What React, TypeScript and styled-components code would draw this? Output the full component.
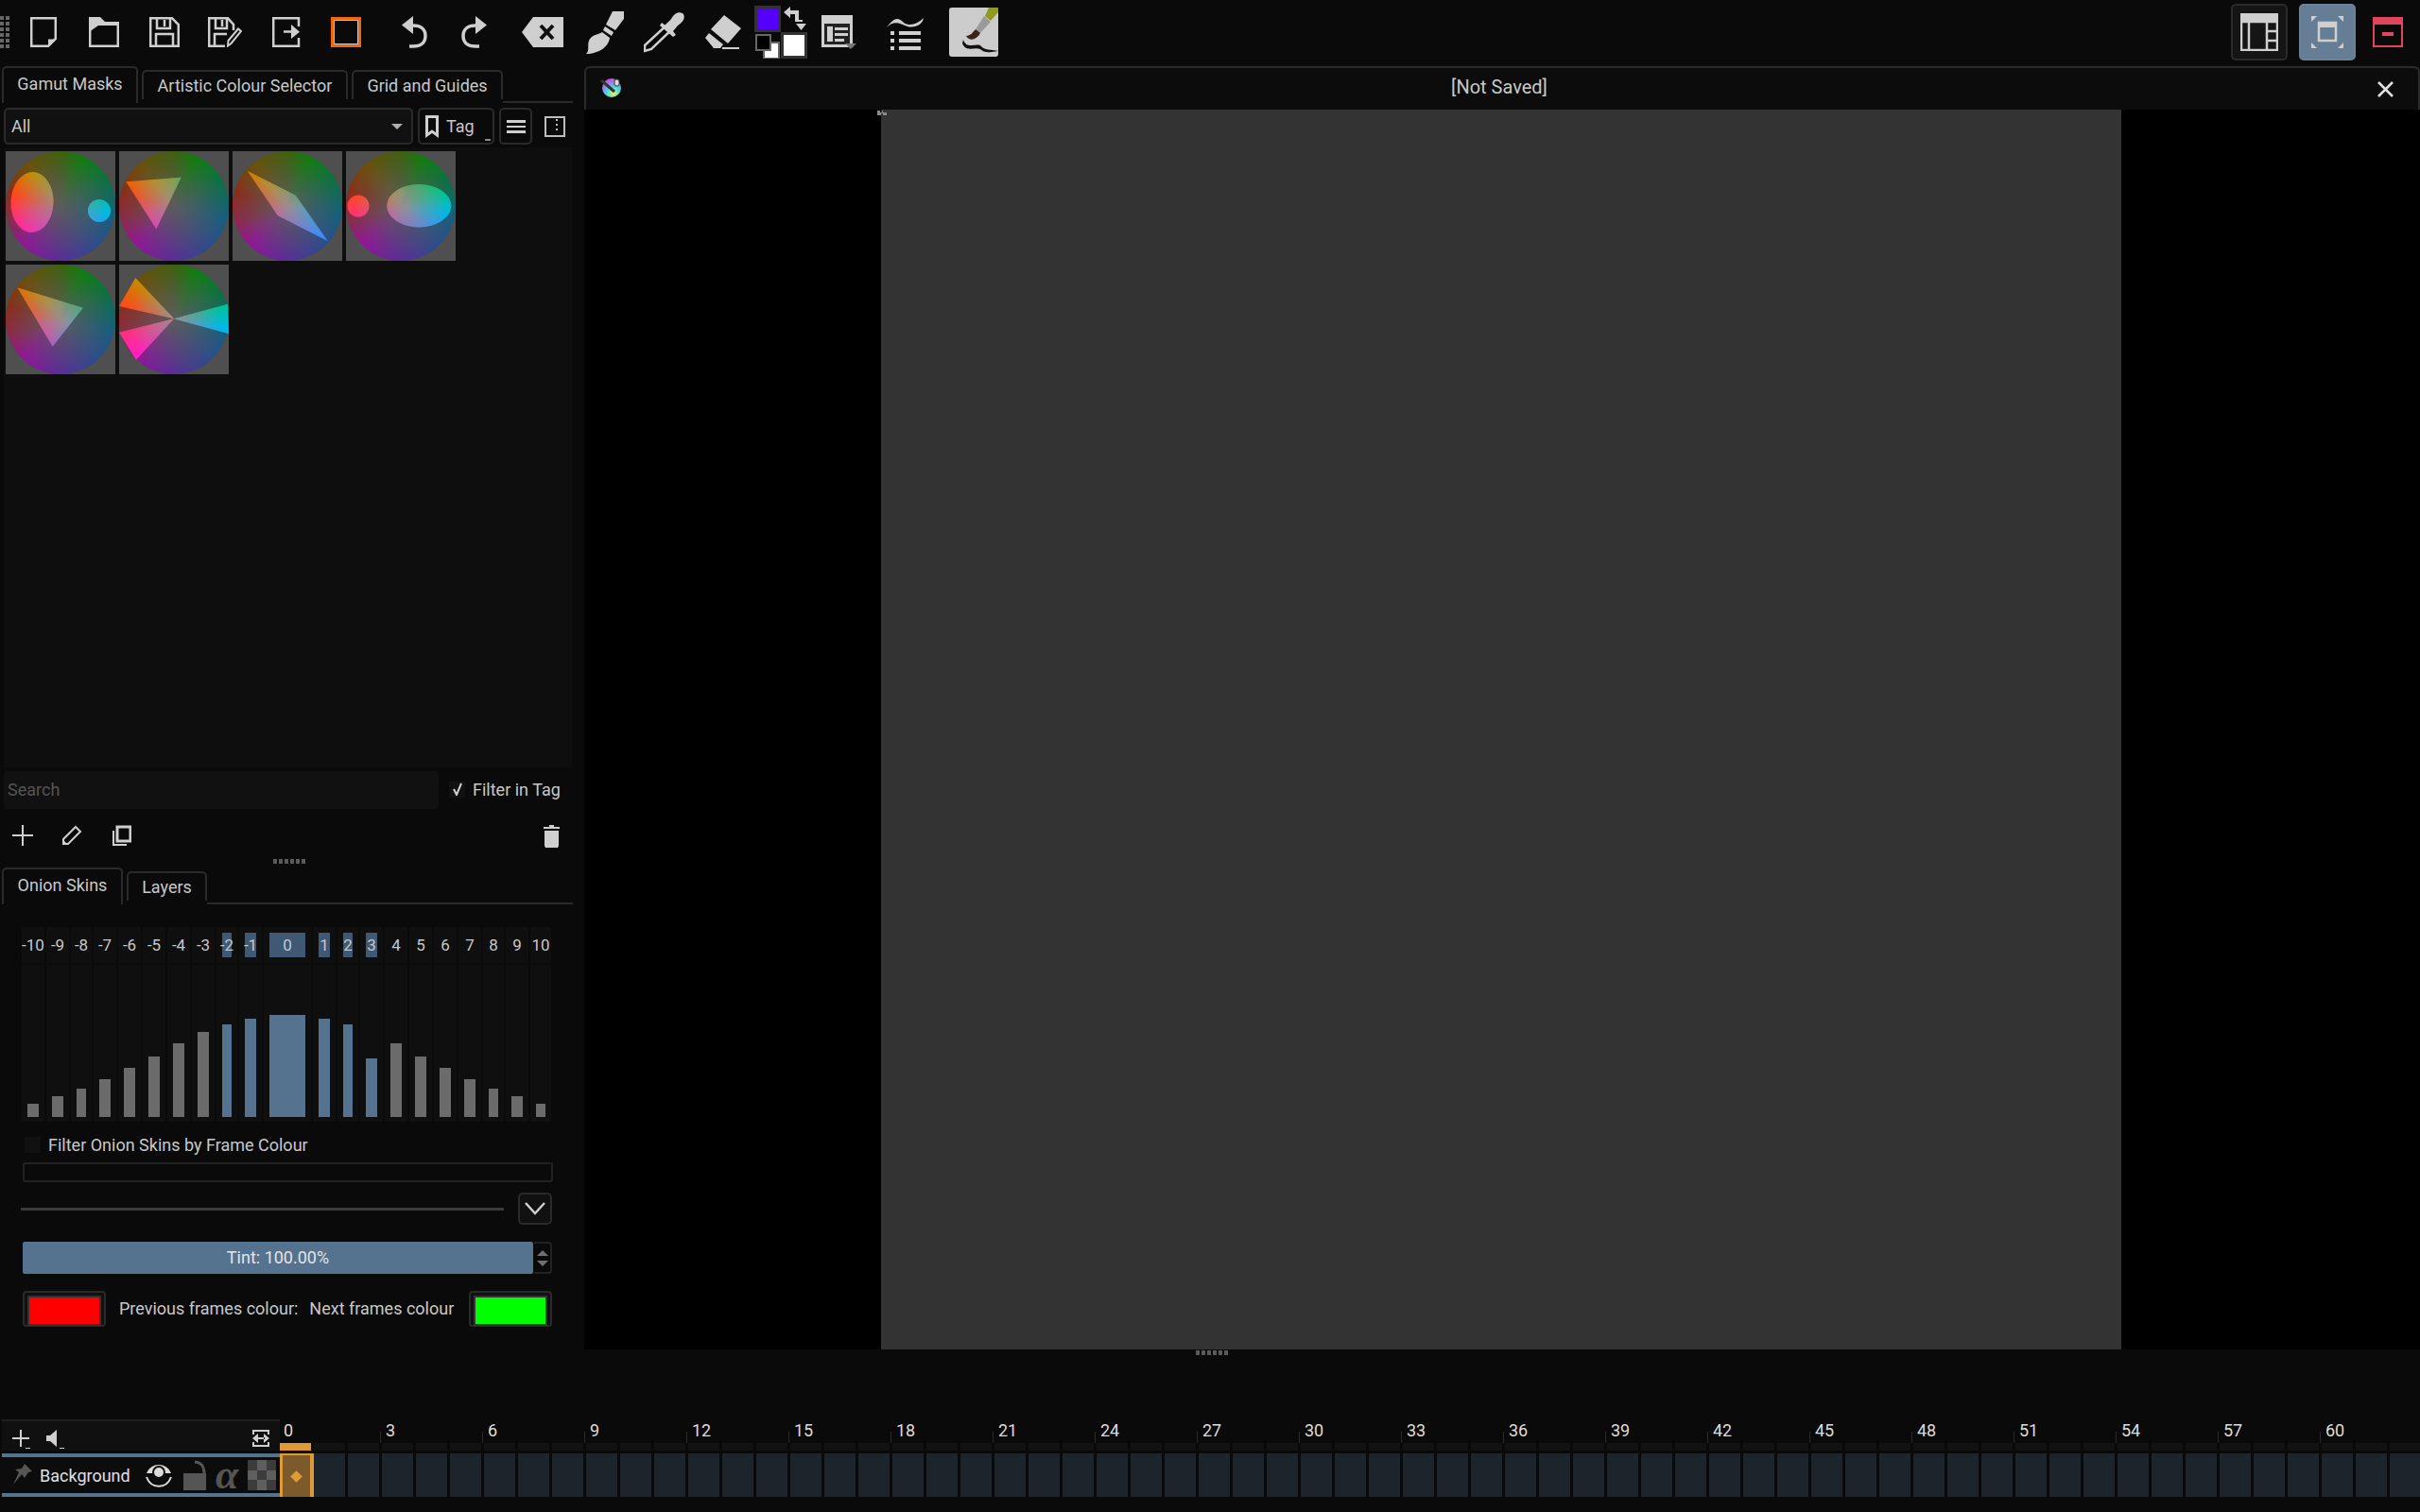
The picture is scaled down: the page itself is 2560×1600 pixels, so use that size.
import styled, { createGlobalStyle } from 'styled-components';

const GlobalStyle = createGlobalStyle`
  html, body {
    margin: 0;
    padding: 0;
    background: #0a0a0a;
  }
  * {
    box-sizing: border-box;
  }
`;

const Page = styled.div`
  width: 2560px;
  height: 1600px;
  overflow: hidden;
  display: flex;
  flex-direction: column;
  background: #0a0a0a;
  color: #c8c8c8;
  font-family: Roboto, 'Liberation Sans', sans-serif;
  font-size: 18px;
`;

const Toolbar = styled.div`
  height: 68px;
  flex: none;
  display: flex;
  align-items: center;
  padding-right: 18px;
`;

const Tool = styled.svg<{ $gap?: number; $solid?: boolean }>`
  flex: none;
  display: block;
  margin-left: ${(p) => p.$gap ?? 0}px;
  fill: none;
  stroke: ${(p) => (p.$solid ? 'none' : '#cfcfcf')};
  stroke-width: 2.5;
`;

const ColourGroup = styled.div`
  flex: none;
  margin-left: 14px;
  display: grid;
  grid-template-columns: 28px 28px;
  grid-template-rows: 28px 28px;
`;

const Swatch = styled.div<{ $colour: string }>`
  background: ${(p) => p.$colour};
  border: 3px solid #333;
`;

const Spacer = styled.div`
  flex: 1;
`;

const ModeButton = styled.div<{ $active?: boolean }>`
  width: 60px;
  height: 60px;
  margin-right: 12px;
  display: flex;
  align-items: center;
  justify-content: center;
  border-radius: 5px;
  border: 2px solid ${(p) => (p.$active ? '#6c8299' : '#2a2a2a')};
  background: ${(p) => (p.$active ? '#667d96' : '#151515')};
`;

const Body = styled.div`
  flex: 1;
  display: flex;
  min-height: 0;
`;

const Dock = styled.div`
  width: 612px;
  flex: none;
  padding-bottom: 96px;
  display: flex;
  flex-direction: column;
`;

const TabBar = styled.div<{ $top: number }>`
  height: 40px;
  flex: none;
  margin-top: ${(p) => p.$top}px;
  padding-left: 2px;
  padding-right: 6px;
  display: flex;
  align-items: flex-start;
  gap: 4px;
`;

const TabLine = styled.div`
  flex: 1;
  align-self: flex-end;
  height: 2px;
  margin-bottom: 1px;
  margin-left: -4px;
  background: #2a2a2a;
`;

const Tab = styled.div<{ $active?: boolean; $width: number }>`
  width: ${(p) => p.$width}px;
  height: ${(p) => (p.$active ? 39 : 31)}px;
  margin-top: ${(p) => (p.$active ? 0 : 4)}px;
  border: 2px solid #2a2a2a;
  border-bottom: none;
  border-radius: 5px 5px 0 0;
  display: flex;
  align-items: center;
  justify-content: center;
  padding-bottom: ${(p) => (p.$active ? 5 : 0)}px;
  font-size: 18px;
`;

const FilterRow = styled.div`
  height: 39px;
  flex: none;
  margin-top: 4px;
  padding-left: 4px;
  display: flex;
  align-items: stretch;
  gap: 5px;
`;

const Combo = styled.div`
  width: 433px;
  display: flex;
  align-items: center;
  justify-content: space-between;
  padding: 0 9px 0 6px;
  border: 2px solid #2a2a2a;
  border-radius: 5px;
  background: #111;
`;

const Caret = styled.div`
  width: 0;
  height: 0;
  border-left: 6px solid transparent;
  border-right: 6px solid transparent;
  border-top: 6px solid #b0b0b0;
`;

const SmallButton = styled.div<{ $width: number; $gap?: number; $bare?: boolean }>`
  width: ${(p) => p.$width}px;
  margin-left: ${(p) => p.$gap ?? 0}px;
  display: flex;
  align-items: center;
  justify-content: center;
  gap: 8px;
  border: 2px solid ${(p) => (p.$bare ? 'transparent' : '#2a2a2a')};
  border-radius: 5px;
`;

const TagButton = styled(SmallButton)`
  justify-content: flex-start;
  padding-left: 6px;
  position: relative;

  &::after {
    content: '';
    position: absolute;
    right: 2px;
    bottom: 2px;
    width: 6px;
    height: 2px;
    background: #8a8a8a;
  }
`;

const MaskPanel = styled.div`
  flex: 1;
  min-height: 0;
  margin: 3px 7px 0 4px;
  padding: 4px 2px;
  background: #0e0e0e;
  display: grid;
  grid-template-columns: repeat(4, 116px);
  grid-auto-rows: 116px;
  gap: 4px;
`;

const Thumb = styled.div`
  position: relative;
  width: 116px;
  height: 116px;
  background: #4f4f4f;
`;

const Wheel = styled.div`
  width: 116px;
  height: 116px;
  border-radius: 50%;
  background:
    radial-gradient(closest-side, #5c5c5c 0, rgba(92, 92, 92, 0) 100%),
    conic-gradient(#3f6010 0deg, #0d7e0c 25deg, #0b7048 65deg, #12607e 100deg, #2f4a8c 140deg,
      #5e2a98 185deg, #94149a 225deg, #8c2a48 255deg, #8c2c18 285deg, #6c5008 320deg, #3f6010 360deg);
`;

const Shape = styled.div<{ $path: string }>`
  position: absolute;
  inset: 0;
  clip-path: path('${(p) => p.$path}');
  background:
    radial-gradient(closest-side, #9c8c90 0, rgba(150, 140, 140, 0) 85%),
    conic-gradient(#70b020 0deg, #20b040 25deg, #00c878 65deg, #00b8e8 100deg, #4a80ff 140deg,
      #8a50e8 185deg, #ff20c0 225deg, #ff3080 255deg, #ff4a18 285deg, #c09000 320deg, #70b020 360deg);
`;

const SearchRow = styled.div`
  height: 40px;
  flex: none;
  margin-top: 4px;
  padding-left: 4px;
  display: flex;
  align-items: center;
`;

const SearchBox = styled.div`
  width: 460px;
  height: 40px;
  padding: 0 0 2px 4px;
  display: flex;
  align-items: center;
  background: #111;
  border-radius: 3px;
  color: #555;
`;

const Check = styled.div`
  width: 17px;
  height: 17px;
  flex: none;
  background: #111;
  display: flex;
  align-items: center;
  justify-content: center;
`;

const CheckLabel = styled.span`
  margin-left: 8px;
`;

const FilterCheck = styled.div`
  margin-left: 11px;
  padding-bottom: 2px;
  display: flex;
  align-items: center;
`;

const ActionRow = styled.div`
  height: 30px;
  flex: none;
  margin-top: 14px;
  padding-left: 13px;
  padding-right: 20px;
  display: flex;
  align-items: center;
  justify-content: space-between;
`;

const ActionGroup = styled.div`
  display: flex;
  gap: 30px;
`;

const Grip = styled.div`
  width: 34px;
  height: 5px;
  background-image: repeating-linear-gradient(90deg, #5a5a5a 0 4px, transparent 4px 6px);
`;

const GripRow = styled.div`
  height: 5px;
  flex: none;
  margin-top: 9px;
  display: flex;
  justify-content: center;
`;

const OnionGrid = styled.div`
  flex: none;
  margin: 23px 0 0 23px;
  display: flex;
  gap: 2px;
`;

const OnionColumn = styled.div<{ $width: number }>`
  width: ${(p) => p.$width}px;
  display: flex;
  flex-direction: column;
  gap: 2px;
`;

const OnionNumber = styled.div`
  height: 38px;
  background: #0f0f0f;
  display: flex;
  justify-content: center;
  align-items: center;
`;

const OnionLabel = styled.div<{ $on: boolean; $barWidth: number }>`
  width: ${(p) => p.$barWidth}px;
  height: 26px;
  display: flex;
  align-items: center;
  justify-content: center;
  white-space: nowrap;
  font-size: 17px;
  background: ${(p) => (p.$on ? '#3f5873' : 'transparent')};
`;

const OnionTrack = styled.div`
  height: 166px;
  padding-bottom: 5px;
  background: #0f0f0f;
  display: flex;
  justify-content: center;
  align-items: flex-end;
`;

const OnionBar = styled.div<{ $on: boolean; $barWidth: number; $height: number }>`
  width: ${(p) => p.$barWidth}px;
  height: ${(p) => p.$height}px;
  background: ${(p) => (p.$on ? '#55728f' : '#6b6b6b')};
`;

const FrameFilter = styled.div`
  margin: 16px 0 0 26px;
  display: flex;
  align-items: center;
  height: 16px;
  flex: none;
`;

const EmptyBox = styled.div`
  margin: 11px 0 0 24px;
  width: 561px;
  height: 21px;
  flex: none;
  border: 2px solid #222;
  border-radius: 3px;
`;

const SliderRow = styled.div`
  margin: 11px 0 0 22px;
  height: 34px;
  flex: none;
  display: flex;
  align-items: center;
`;

const SliderLine = styled.div`
  width: 511px;
  height: 3px;
  background: #3a3a3a;
`;

const ChevronButton = styled.div`
  width: 36px;
  height: 34px;
  margin-left: 15px;
  display: flex;
  align-items: center;
  justify-content: center;
  border: 2px solid #2a2a2a;
  border-radius: 5px;
  background: #111;
`;

const TintRow = styled.div`
  margin: 18px 0 0 24px;
  width: 560px;
  height: 34px;
  flex: none;
  display: flex;
`;

const TintBar = styled.div`
  width: 540px;
  padding-bottom: 2px;
  display: flex;
  align-items: center;
  justify-content: center;
  background: #55728f;
  border-radius: 2px;
  color: #e4e4e4;
`;

const Spin = styled.div`
  flex: 1;
  margin-left: 1px;
  display: flex;
  flex-direction: column;
  align-items: center;
  justify-content: center;
  gap: 5px;
  border: 2px solid #222;
  border-left: none;
  border-radius: 0 4px 4px 0;
`;

const Arrow = styled.div<{ $up?: boolean }>`
  width: 0;
  height: 0;
  border-left: 6px solid transparent;
  border-right: 6px solid transparent;
  ${(p) => (p.$up ? 'border-bottom' : 'border-top')}: 6px solid #707070;
`;

const FramesRow = styled.div`
  margin: 18px 0 0 24px;
  width: 560px;
  height: 38px;
  flex: none;
  display: flex;
  align-items: center;
`;

const FrameSwatch = styled.div<{ $colour: string }>`
  width: 88px;
  height: 38px;
  flex: none;
  padding: 3px;
  border: 2px solid #2a2a2a;
  border-radius: 4px;
  background: #111;

  &::after {
    content: '';
    display: block;
    height: 100%;
    background: ${(p) => p.$colour};
    border: 2px solid #333;
  }
`;

const FrameText = styled.span<{ $gap: number }>`
  margin-left: ${(p) => p.$gap}px;
  padding-bottom: 2px;
  white-space: nowrap;
`;

const Main = styled.div`
  flex: 1;
  min-width: 0;
  padding: 2px 0 0 6px;
  display: flex;
  flex-direction: column;
`;

const SubWindow = styled.div`
  height: 1358px;
  flex: none;
  display: flex;
  flex-direction: column;
`;

const SubHeader = styled.div`
  height: 46px;
  flex: none;
  padding: 0 26px 4px 15px;
  display: flex;
  align-items: center;
  justify-content: space-between;
  border: 2px solid #2a2a2a;
  border-bottom: none;
  border-radius: 6px 6px 0 0;
  background: #0c0c0c;
`;

const SubTitle = styled.div`
  flex: 1;
  text-align: center;
  font-size: 20px;
`;

const CloseIcon = styled.svg`
  margin-top: 4px;
`;

const CanvasArea = styled.div`
  flex: 1;
  background: #000;
  display: flex;
  justify-content: center;
  padding-right: 2px;
`;

const Sheet = styled.div`
  width: 1312px;
  background: #333;
  position: relative;
`;

const SheetMark = styled.svg`
  position: absolute;
  left: -4px;
  top: 1px;
`;

const MainGrip = styled.div`
  height: 6px;
  flex: none;
  display: flex;
  align-items: center;
  justify-content: center;
  padding-right: 614px;
`;

const Timeline = styled.div`
  height: 100px;
  flex: none;
  display: flex;
  padding-top: 2px;
`;

const LayerColumn = styled.div`
  width: 296px;
  flex: none;
  padding-left: 2px;
  display: flex;
  flex-direction: column;
`;

const LayerHead = styled.div`
  height: 33px;
  flex: none;
  padding: 9px 11px 0 11px;
  display: flex;
  align-items: flex-start;
  background: #101010;
  border-top: 2px solid #1e1e1e;
`;

const LayerRow = styled.div`
  height: 46px;
  margin-top: 3px;
  flex: none;
  display: flex;
  align-items: center;
  padding-left: 12px;
  border-top: 4px solid #55728f;
  border-bottom: 4px solid #55728f;
  background: #0c0c0c;
`;

const LayerName = styled.span`
  margin-left: 8px;
  width: 112px;
  color: #e0e0e0;
`;

const Alpha = styled.span`
  width: 34px;
  margin-left: 10px;
  font-family: 'Liberation Serif', serif;
  font-style: italic;
  font-weight: bold;
  font-size: 44px;
  line-height: 34px;
  color: #555;
`;

const FrameColumn = styled.div`
  flex: 1;
  min-width: 0;
  overflow: hidden;
`;

const Ruler = styled.div`
  height: 25px;
  display: flex;
`;

const RulerMark = styled.div<{ $first: boolean }>`
  width: 108px;
  flex: none;
  padding-left: 6px;
  margin-left: ${(p) => (p.$first ? -2 : 0)}px;
  background: ${(p) => (p.$first ? 'none' : 'linear-gradient(#2a2a2a, #2a2a2a) left bottom / 1px 12px no-repeat')};
  color: #dcdcdc;
  line-height: 23px;
`;

const TickRow = styled.div`
  height: 8px;
  display: flex;
`;

const Tick = styled.div<{ $on: boolean }>`
  width: 36px;
  flex: none;
  border-right: 3px solid #0a0a0a;
  background: ${(p) => (p.$on ? '#e09a35' : '#121212')};
`;

const CellRow = styled.div`
  height: 46px;
  margin-top: 3px;
  display: flex;
`;

const Cell = styled.div`
  width: 36px;
  flex: none;
  border-right: 3px solid #0a0a0a;
  background: #1e242c;
`;

const KeyCell = styled.div`
  width: 36px;
  flex: none;
  display: flex;
  align-items: center;
  justify-content: center;
  background: #7c5a2c;
  border-left: 3px solid #e09a35;
  border-right: 4px solid #e09a35;
  border-top: 2px solid #e09a35;
`;

const KeyDot = styled.div`
  width: 9px;
  height: 9px;
  transform: rotate(45deg);
  background: #e09a35;
`;

const onion = [
  [-10, 24, 12, 14], [-9, 24, 12, 22], [-8, 22, 10, 30], [-7, 24, 12, 40], [-6, 24, 12, 52],
  [-5, 24, 12, 64], [-4, 24, 12, 78], [-3, 24, 12, 90], [-2, 22, 10, 98], [-1, 24, 12, 104],
  [0, 50, 38, 108], [1, 24, 12, 104], [2, 22, 10, 98], [3, 24, 12, 62], [4, 24, 12, 78],
  [5, 24, 12, 64], [6, 24, 12, 52], [7, 24, 12, 40], [8, 22, 10, 30], [9, 24, 12, 22], [10, 22, 10, 14],
];

const ellipse = (cx: number, cy: number, rx: number, ry: number, rot = 0) => {
  const a = (rot * Math.PI) / 180;
  const dx = rx * Math.cos(a);
  const dy = rx * Math.sin(a);
  return `M${cx - dx} ${cy - dy}A${rx} ${ry} ${rot} 1 0 ${cx + dx} ${cy + dy}A${rx} ${ry} ${rot} 1 0 ${cx - dx} ${cy - dy}Z`;
};

const masks = [
  ellipse(28, 54, 32, 22.5, 92) + ellipse(99, 63, 12, 12),
  'M7.3 32.3L65.7 27.7L39.3 82.3Z',
  'M15.7 20.7L66.7 46.7L100.7 95L48 68.3Z',
  ellipse(13, 58, 11.5, 11.5) + ellipse(77.3, 57.7, 34, 22.7),
  'M12.3 24.3L81.7 45.7L49.7 86.7Z',
  'M58 57.3L17.3 14L0 44ZM58 57.3L115 41.7L116 73.3ZM58 57.3L0 71.7L18 100.7Z',
];

const marks = Array.from({ length: 21 }, (_, i) => i * 3);
const frames = Array.from({ length: 64 }, (_, i) => i);

export default function App() {
  return (
    <>
      <GlobalStyle />
      <Page>
        <Toolbar>
          <Tool $solid width="10" height="34" viewBox="0 0 10 34">
            <path d="M0 0h4v4h-4zM6 0h4v4h-4zM0 6h4v4h-4zM6 6h4v4h-4zM0 12h4v4h-4zM6 12h4v4h-4zM0 18h4v4h-4zM6 18h4v4h-4zM0 24h4v4h-4zM6 24h4v4h-4zM0 30h4v4h-4zM6 30h4v4h-4z" fill="#666" />
          </Tool>
          <Tool $gap={22} width="28" height="32" viewBox="0 0 28 32">
            <path d="M1.2 1.2H26.8V23L19 30.8H1.2Z" />
            <path d="M27 23.5V24L20 31H19V23.5Z" fill="#cfcfcf" stroke="none" />
          </Tool>
          <Tool $gap={34} width="32" height="32" viewBox="0 0 32 32">
            <path d="M1.2 8V30.8H30.8V8" />
            <path d="M0 0H12L17 5H32V9H10L0 16Z" fill="#cfcfcf" stroke="none" />
          </Tool>
          <Tool $gap={32} width="32" height="32" viewBox="0 0 32 32">
            <path d="M1.2 1.2H24L30.8 8V30.8H1.2Z" />
            <path d="M8 1.2V12H22V1.2M16 3V10M7 30.8V18H25V30.8" />
          </Tool>
          <Tool $gap={30} width="36" height="32" viewBox="0 0 36 32">
            <path d="M27 14V8L21 1.2H1.2V30.8H18" />
            <path d="M8 1.2V12H20V1.2M15 3V10M7 30.8V18H20" />
            <path d="M21 30.5L21.5 25L32 12.5L35 15L24.5 28Z" strokeWidth="2" />
          </Tool>
          <Tool $gap={32} width="30" height="32" viewBox="0 0 30 32">
            <path d="M28 10V1.2H1.2V30.8H28V22" />
            <path d="M12 15.5H20" />
            <path d="M29 15.8L20 8V23Z" fill="#cfcfcf" stroke="none" />
          </Tool>
          <Tool $gap={32} width="32" height="32" viewBox="0 0 32 32">
            <rect x="1.5" y="1.5" width="29" height="29" stroke="#f5640f" strokeWidth="3" />
            <rect x="3.5" y="3.5" width="25" height="25" stroke="#c8c8c8" strokeWidth="1" />
          </Tool>
          <Tool $gap={43} width="27" height="34" viewBox="0 0 27 34">
            <path d="M10 10H12C20 10 25 14 25 21C25 28 20 32 12 32H8" strokeWidth="3.5" />
            <path d="M12 0V19L0 9.5Z" fill="#cfcfcf" stroke="none" />
          </Tool>
          <Tool $gap={36} width="27" height="34" viewBox="0 0 27 34">
            <path d="M17 10H15C7 10 2 14 2 21C2 28 7 32 15 32H19" strokeWidth="3.5" />
            <path d="M15 0V19L27 9.5Z" fill="#cfcfcf" stroke="none" />
          </Tool>
          <Tool $gap={37} width="44" height="32" viewBox="0 0 44 32">
            <path d="M12 0H44V32H12L0 16Z" fill="#cfcfcf" stroke="none" />
            <path d="M20 9L33 23M33 9L20 23" stroke="#111" strokeWidth="4" />
          </Tool>
          <Tool $gap={24} width="40" height="46" viewBox="0 0 40 46">
            <path d="M28 1H40V9L31 21L21 15Z" fill="#cfcfcf" stroke="none" />
            <path d="M20 17L29 23L27 27L18 21Z" fill="#cfcfcf" stroke="none" />
            <path d="M17 23L25 29C24 38 14 46 0 46C5 42 -1 34 6 28C10 25 14 25 17 23Z" fill="#cfcfcf" stroke="none" />
          </Tool>
          <Tool $gap={21} width="43" height="44" viewBox="0 0 43 44">
            <path d="M27 12L32 17L8 40L1 42V36Z" />
            <path d="M17 15L19 12L23 15L29 8C33 0 40 0 42 3C44 7 42 11 36 15L31 21L34 25L31 27Z" fill="#cfcfcf" stroke="none" />
          </Tool>
          <Tool $gap={22} width="38" height="36" viewBox="0 0 38 36">
            <path d="M20 0L38 14L24 30L6 15Z" fill="#cfcfcf" stroke="none" />
            <path d="M4 19L19 31L16 35H9L0 24Z" fill="#cfcfcf" stroke="none" />
            <path d="M18 35H36" strokeWidth="2" />
          </Tool>
          <ColourGroup>
            <Swatch $colour="#5500ff" />
            <Tool $solid width="28" height="28" viewBox="0 0 28 28">
              <path d="M3 7L10 1V5H19V15H23V17H15V9H10V13Z" fill="#cfcfcf" />
              <path d="M16 19H27L21.5 26Z" fill="#cfcfcf" />
            </Tool>
            <Tool $solid width="28" height="28" viewBox="0 0 28 28">
              <rect x="10" y="11" width="16" height="17" fill="#fff" stroke="#666" strokeWidth="2" />
              <rect x="2" y="3" width="15" height="16" fill="#000" stroke="#666" strokeWidth="2" />
            </Tool>
            <Swatch $colour="#fff" />
          </ColourGroup>
          <Tool $solid $gap={15} width="37" height="36" viewBox="0 0 37 36">
            <rect width="33" height="34" fill="#cfcfcf" />
            <rect x="3" y="9" width="27" height="22" fill="#222" />
            <path d="M6 12H12V28H6ZM14 13H28V16H14ZM14 19H28V22H14ZM14 25H24V28H14Z" fill="#cfcfcf" />
            <path d="M25 30H37L31 36Z" fill="#777" />
          </Tool>
          <Tool $gap={32} width="40" height="37" viewBox="0 0 40 37">
            <path d="M0 13C8 2 12 2 18 8C24 12 32 10 39 3C38 10 30 14 22 12C14 9 8 5 0 13Z" fill="#cfcfcf" stroke="none" />
            <path d="M4 17H8V21H4ZM4 25H8V29H4ZM4 33H8V37H4ZM13 17H36V21H13ZM13 25H36V29H13ZM13 33H36V37H13Z" fill="#cfcfcf" stroke="none" />
          </Tool>
          <Tool $solid $gap={26} width="52" height="52" viewBox="0 0 52 52">
            <rect width="52" height="52" rx="3" fill="#cccccc" />
            <path d="M42 0H52V5L44 14L38 9Z" fill="#8e9a20" />
            <path d="M37 9L44 15L33 27L28 23Z" fill="#9a9a9a" />
            <path d="M28 23L33 27C30 33 22 37 18 30C23 30 25 26 28 23Z" fill="#3a2418" />
            <path d="M15 34C18 44 28 38 33 40C38 46 44 44 52 46C44 47 38 49 33 44C27 41 18 48 14 38Z" fill="#111" />
          </Tool>
          <Spacer />
          <ModeButton>
            <svg width="40" height="40" viewBox="0 0 40 40" fill="none" stroke="#cfcfcf" strokeWidth="2.5">
              <rect x="1" y="1" width="38" height="38" />
              <path d="M1 9H39M9 9V39M28 9V39M28 19H39M28 29H39" />
              <path d="M1 1H39V8H1Z" fill="#cfcfcf" stroke="none" />
            </svg>
          </ModeButton>
          <ModeButton $active>
            <svg width="34" height="34" viewBox="0 0 34 34" fill="none" stroke="#cfcfcf" strokeWidth="2.5">
              <path d="M0 0H6L0 6ZM34 0V6L28 0ZM0 34V28L6 34ZM34 34H28L34 28Z" fill="#cfcfcf" stroke="none" />
              <rect x="8" y="7" width="18" height="19" />
              <path d="M7 6H27V12H7Z" fill="#cfcfcf" stroke="none" />
            </svg>
          </ModeButton>
          <Tool $solid $gap={6} width="32" height="32" viewBox="0 0 32 32">
            <rect x="1" y="1" width="30" height="30" fill="none" stroke="#e0455a" strokeWidth="2" />
            <rect width="32" height="8" fill="#e0455a" />
            <rect x="10" y="16" width="12" height="4" fill="#e0455a" />
          </Tool>
        </Toolbar>
        <Body>
          <Dock>
            <TabBar $top={2}>
              <Tab $active $width={144}>Gamut Masks</Tab>
              <Tab $width={218}>Artistic Colour Selector</Tab>
              <Tab $width={160}>Grid and Guides</Tab>
              <TabLine />
            </TabBar>
            <FilterRow>
              <Combo>
                <span>All</span>
                <Caret />
              </Combo>
              <TagButton $width={81}>
                <svg width="14" height="24" viewBox="0 0 14 24" fill="none" stroke="#cfcfcf" strokeWidth="3">
                  <path d="M1.5 1.5H12.5V21L7 17L1.5 21Z" />
                </svg>
                <span>Tag</span>
              </TagButton>
              <SmallButton $width={35}>
                <svg width="20" height="16" viewBox="0 0 20 16">
                  <path d="M0 1H20V4H0ZM0 7H20V9H0ZM0 12H20V15H0Z" fill="#cfcfcf" />
                </svg>
              </SmallButton>
              <SmallButton $width={27} $gap={5} $bare>
                <svg width="22" height="22" viewBox="0 0 22 22" fill="none" stroke="#bdbdbd" strokeWidth="2">
                  <rect x="1" y="1" width="20" height="20" />
                  <path d="M13 3V5M13 8V10M13 13V15" />
                </svg>
              </SmallButton>
            </FilterRow>
            <MaskPanel>
              {masks.map((path) => (
                <Thumb key={path}>
                  <Wheel />
                  <Shape $path={path} />
                </Thumb>
              ))}
            </MaskPanel>
            <SearchRow>
              <SearchBox>Search</SearchBox>
              <FilterCheck>
                <Check>
                  <svg width="10" height="14" viewBox="0 0 10 14" fill="none" stroke="#cfcfcf" strokeWidth="2">
                    <path d="M1 7L4 13L9 1" />
                  </svg>
                </Check>
                <CheckLabel>Filter in Tag</CheckLabel>
              </FilterCheck>
            </SearchRow>
            <ActionRow>
              <ActionGroup>
                <svg width="22" height="22" viewBox="0 0 22 22">
                  <path d="M10 0H12V10H22V12H12V22H10V12H0V10H10Z" fill="#cfcfcf" />
                </svg>
                <svg width="22" height="22" viewBox="0 0 22 22" fill="none" stroke="#cfcfcf" strokeWidth="2">
                  <path d="M15 2L20 7L7 20L2 20V15Z" />
                  <path d="M1 21V15L7 21Z" fill="#cfcfcf" stroke="none" />
                </svg>
                <svg width="22" height="24" viewBox="0 0 22 24" fill="none" stroke="#cfcfcf" strokeWidth="2">
                  <rect x="7" y="2" width="14" height="15" strokeWidth="3" />
                  <path d="M3 6V21H17" />
                </svg>
              </ActionGroup>
              <svg width="17" height="24" viewBox="0 0 17 24">
                <path d="M6 0H11V2H17V4H0V2H6ZM1 6H16V22L15 24H2L1 22Z" fill="#cfcfcf" />
              </svg>
            </ActionRow>
            <GripRow>
              <Grip />
            </GripRow>
            <TabBar $top={4}>
              <Tab $active $width={128}>Onion Skins</Tab>
              <Tab $width={85}>Layers</Tab>
              <TabLine />
            </TabBar>
            <OnionGrid>
              {onion.map(([n, width, bar, height]) => {
                const on = n >= -2 && n <= 3;
                return (
                  <OnionColumn key={n} $width={width}>
                    <OnionNumber>
                      <OnionLabel $on={on} $barWidth={bar}>{n}</OnionLabel>
                    </OnionNumber>
                    <OnionTrack>
                      <OnionBar $on={on} $barWidth={bar} $height={height} />
                    </OnionTrack>
                  </OnionColumn>
                );
              })}
            </OnionGrid>
            <FrameFilter>
              <Check />
              <CheckLabel>Filter Onion Skins by Frame Colour</CheckLabel>
            </FrameFilter>
            <EmptyBox />
            <SliderRow>
              <SliderLine />
              <ChevronButton>
                <svg width="22" height="14" viewBox="0 0 22 14" fill="none" stroke="#cfcfcf" strokeWidth="2.5">
                  <path d="M1 1L11 12L21 1" />
                </svg>
              </ChevronButton>
            </SliderRow>
            <TintRow>
              <TintBar>Tint: 100.00%</TintBar>
              <Spin>
                <Arrow $up />
                <Arrow />
              </Spin>
            </TintRow>
            <FramesRow>
              <FrameSwatch $colour="#ff0000" />
              <FrameText $gap={14}>Previous frames colour:</FrameText>
              <FrameText $gap={12}>Next frames colour</FrameText>
              <Spacer />
              <FrameSwatch $colour="#00ff00" />
            </FramesRow>
          </Dock>
          <Main>
            <SubWindow>
              <SubHeader>
                <svg width="22" height="22" viewBox="0 0 22 22">
                  <defs>
                    <radialGradient id="logoFill" cx="0.6" cy="0.8" r="0.9">
                      <stop offset="0" stopColor="#f0f060" />
                      <stop offset="0.4" stopColor="#40d8e8" />
                      <stop offset="1" stopColor="#ff20e0" />
                    </radialGradient>
                  </defs>
                  <circle cx="12" cy="12" r="10" fill="url(#logoFill)" />
                  <path d="M1 4L15 16" stroke="#333" strokeWidth="3" />
                  <rect x="15" y="3" width="5" height="7" rx="2" fill="#ddd" stroke="#333" />
                </svg>
                <SubTitle>[Not Saved]</SubTitle>
                <CloseIcon width="17" height="17" viewBox="0 0 17 17" fill="none" stroke="#e0e0e0" strokeWidth="2.5">
                  <path d="M1 1L16 16M16 1L1 16" />
                </CloseIcon>
              </SubHeader>
              <CanvasArea>
                <Sheet>
                  <SheetMark width="10" height="5" viewBox="0 0 10 5">
                    <path d="M0 0H3V2H5V0H6V2H10V5H6V3H4V5H0Z" fill="#8a8a8a" />
                  </SheetMark>
                </Sheet>
              </CanvasArea>
            </SubWindow>
            <MainGrip>
              <Grip />
            </MainGrip>
          </Main>
        </Body>
        <Timeline>
          <LayerColumn>
            <LayerHead>
              <svg width="20" height="22" viewBox="0 0 20 22">
                <path d="M8 0H10V8H18V10H10V18H8V10H0V8H8ZM14 19H19V20H14Z" fill="#cfcfcf" />
              </svg>
              <Tool $solid $gap={16} width="20" height="22" viewBox="0 0 20 22">
                <path d="M0 6H4L11 0V18L4 12H0Z" fill="#cfcfcf" />
                <path d="M14 19H19V20H14Z" fill="#cfcfcf" />
              </Tool>
              <Spacer />
              <svg width="18" height="18" viewBox="0 0 18 18" fill="none" stroke="#cfcfcf" strokeWidth="2">
                <path d="M1 5V1H17V5M1 13V17H17V13" />
                <path d="M0 9L6 4V14ZM18 9L12 4V14ZM5 8H13V10H5Z" fill="#cfcfcf" stroke="none" />
              </svg>
            </LayerHead>
            <LayerRow>
              <svg width="20" height="24" viewBox="0 0 20 24">
                <path d="M12 0L20 8L16 9L12 15L9 11L0 22L6 9L2 6L9 5Z" fill="#555" />
              </svg>
              <LayerName>Background</LayerName>
              <svg width="28" height="30" viewBox="0 0 28 30" fill="none" stroke="#dcdcdc" strokeWidth="2">
                <path d="M1 13C6 1 22 1 27 13" fill="#dcdcdc" stroke="none" />
                <circle cx="14" cy="12" r="6" fill="#dcdcdc" stroke="#111" />
                <path d="M1 17C6 30 22 30 27 17" />
              </svg>
              <Tool $solid $gap={12} width="24" height="32" viewBox="0 0 24 32">
                <path d="M0 14H24V32H0Z" fill="#555" />
                <path d="M12 2C18 2 22 6 22 14" fill="none" stroke="#555" strokeWidth="3" />
              </Tool>
              <Alpha>α</Alpha>
              <svg width="30" height="32" viewBox="0 0 30 32">
                <path d="M0 0H30V32H0Z" fill="#3c3c3c" />
                <path d="M10 0H20V11H10ZM0 11H10V21H0ZM20 11H30V21H20ZM10 21H20V32H10Z" fill="#5e5e5e" />
              </svg>
            </LayerRow>
          </LayerColumn>
          <FrameColumn>
            <Ruler>
              {marks.map((m) => (
                <RulerMark key={m} $first={m === 0}>{m}</RulerMark>
              ))}
            </Ruler>
            <TickRow>
              {frames.map((f) => (
                <Tick key={f} $on={f === 0} />
              ))}
            </TickRow>
            <CellRow>
              <KeyCell>
                <KeyDot />
              </KeyCell>
              {frames.slice(1).map((f) => (
                <Cell key={f} />
              ))}
            </CellRow>
          </FrameColumn>
        </Timeline>
      </Page>
    </>
  );
}
